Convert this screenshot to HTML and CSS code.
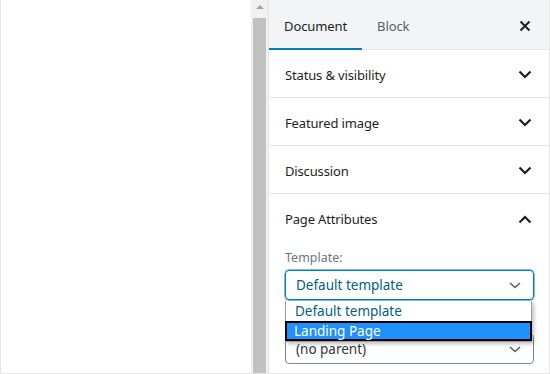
FILE: index.html
```html
<!DOCTYPE html>
<html>
<head>
<meta charset="utf-8">
<link rel="stylesheet" href="styles.css">
</head>
<body>
<div class="frame">
  <div class="canvas"></div>
  <div class="scrollbar">
    <div class="sb-arrow"><span class="tri"></span></div>
    <div class="sb-thumb"></div>
  </div>
  <aside class="sidebar">
    <div class="header">
      <div class="tab active">Document</div>
      <div class="tab">Block</div>
      <div class="spacer"></div>
      <div class="close">
        <svg width="12" height="12" viewBox="0 0 12 12"><path d="M1.5 1.5L10.5 10.5M10.5 1.5L1.5 10.5" stroke="#1e1e1e" stroke-width="2" fill="none"/></svg>
      </div>
    </div>
    <div class="section">
      <span class="title">Status &amp; visibility</span>
      <svg class="chev" width="14" height="9" viewBox="0 0 14 9"><path d="M1.5 1.5L7 7L12.5 1.5" stroke="#1e1e1e" stroke-width="2.2" fill="none"/></svg>
    </div>
    <div class="section">
      <span class="title">Featured image</span>
      <svg class="chev" width="14" height="9" viewBox="0 0 14 9"><path d="M1.5 1.5L7 7L12.5 1.5" stroke="#1e1e1e" stroke-width="2.2" fill="none"/></svg>
    </div>
    <div class="section">
      <span class="title">Discussion</span>
      <svg class="chev" width="14" height="9" viewBox="0 0 14 9"><path d="M1.5 1.5L7 7L12.5 1.5" stroke="#1e1e1e" stroke-width="2.2" fill="none"/></svg>
    </div>
    <div class="section open">
      <span class="title">Page Attributes</span>
      <svg class="chev" width="14" height="9" viewBox="0 0 14 9"><path d="M1.5 7.5L7 2L12.5 7.5" stroke="#1e1e1e" stroke-width="2.2" fill="none"/></svg>
    </div>
    <div class="section-body">
      <label class="label">Template:</label>
      <div class="select-wrap">
        <div class="select focused">
          <span>Default template</span>
          <svg class="sel-chev" width="12" height="7" viewBox="0 0 12 7"><path d="M1 1L6 5.5L11 1" stroke="#555d66" stroke-width="1.5" fill="none"/></svg>
        </div>
        <ul class="dropdown">
          <li>Default template</li>
          <li class="hl">Landing Page</li>
        </ul>
      </div>
      <div class="label-gap"></div>
      <div class="select">
        <span class="plain">(no parent)</span>
        <svg class="sel-chev" width="12" height="7" viewBox="0 0 12 7"><path d="M1 1L6 5.5L11 1" stroke="#555d66" stroke-width="1.5" fill="none"/></svg>
      </div>
    </div>
  </aside>
</div>
</body>
</html>
```
FILE: styles.css
```css
html, body {
  margin: 0;
  padding: 0;
}
body {
  width: 550px;
  height: 374px;
  overflow: hidden;
  font-family: "Noto Sans", "Open Sans", sans-serif;
  background: #fff;
}
.frame {
  box-sizing: border-box;
  width: 550px;
  height: 374px;
  display: flex;
  border-left: 1px solid #e6e6e6;
  border-right: 1px solid #e6e6e6;
  border-bottom: 1px solid #e6e6e6;
}
.canvas {
  flex: 1;
  background: #fff;
}
.scrollbar {
  width: 17px;
  background: #f1f1f1;
  display: flex;
  flex-direction: column;
  align-items: center;
}
.sb-arrow {
  height: 18px;
  width: 100%;
  display: flex;
  justify-content: center;
  align-items: center;
}
.tri {
  width: 0;
  height: 0;
  border-left: 4px solid transparent;
  border-right: 4px solid transparent;
  border-bottom: 4px solid #a3a3a3;
  margin-top: -4px;
}
.sb-thumb {
  flex: 1;
  width: 13px;
  background: #c1c1c1;
}
.sidebar {
  width: 280px;
  border-left: 1px solid #e2e4e7;
  display: flex;
  flex-direction: column;
  color: #1e1e1e;
}
.header {
  height: 50px;
  box-sizing: border-box;
  background: #f3f4f5;
  border-bottom: 1px solid #e2e4e7;
  display: flex;
  align-items: stretch;
}
.tab {
  padding: 0 15px;
  font-size: 13px;
  letter-spacing: -0.1px;
  display: flex;
  align-items: center;
  color: #555d66;
  box-sizing: border-box;
  border-bottom: 2px solid transparent;
  margin-bottom: -1px;
  padding-top: 3px;
}
.tab.active {
  color: #191e23;
  border-bottom-color: #007cba;
}
.spacer { flex: 1; }
.close {
  width: 40px;
  display: flex;
  align-items: center;
  justify-content: center;
  margin-right: 4px;
  padding-top: 3px;
}
.section {
  height: 48px;
  box-sizing: border-box;
  border-bottom: 1px solid #e2e4e7;
  display: flex;
  align-items: center;
  padding: 2px 16px 0 16px;
}
.section.open {
  border-bottom: none;
}
.title {
  flex: 1;
  font-size: 13px;
  letter-spacing: -0.15px;
  color: #1e1e1e;
}
.chev {
  margin-right: 1px;
}
.section-body {
  padding: 6px 15px 0 16px;
  display: flex;
  flex-direction: column;
}
.label {
  font-size: 12.5px;
  color: #6c7781;
  height: 21px;
  line-height: 18px;
  padding-top: 1px;
}
.label-gap {
  height: 22px;
}
.select-wrap {
  position: relative;
  margin-bottom: 12px;
}
.select {
  height: 30px;
  box-sizing: border-box;
  border: 1px solid #7e8993;
  border-radius: 4px;
  display: flex;
  align-items: center;
  padding: 0 9px 0 10px;
  font-size: 13.5px;
  color: #32373c;
}
.select span {
  flex: 1;
}
.select.focused {
  border-color: #007cba;
  box-shadow: 0 0 0 0.5px #007cba;
  color: #016087;
}
.sel-chev {
  margin-right: 3px;
}
.dropdown {
  position: absolute;
  left: 0;
  top: 31px;
  width: 247px;
  box-sizing: border-box;
  margin: 0;
  padding: 0;
  list-style: none;
  background: #fff;
  border: 1px solid #a0a0a0;
  border-top: none;
  box-shadow: 2px 2px 4px rgba(0, 0, 0, 0.25);
  font-size: 13.5px;
  color: #016087;
}
.dropdown li {
  height: 20px;
  line-height: 20px;
  padding: 0 9px;
  box-sizing: border-box;
}
.dropdown li.hl {
  background: #1e90ff;
  color: #fff;
  border: 2px solid #000;
  line-height: 16px;
  padding: 0 7px;
  margin: 0 -1px;
}
```
